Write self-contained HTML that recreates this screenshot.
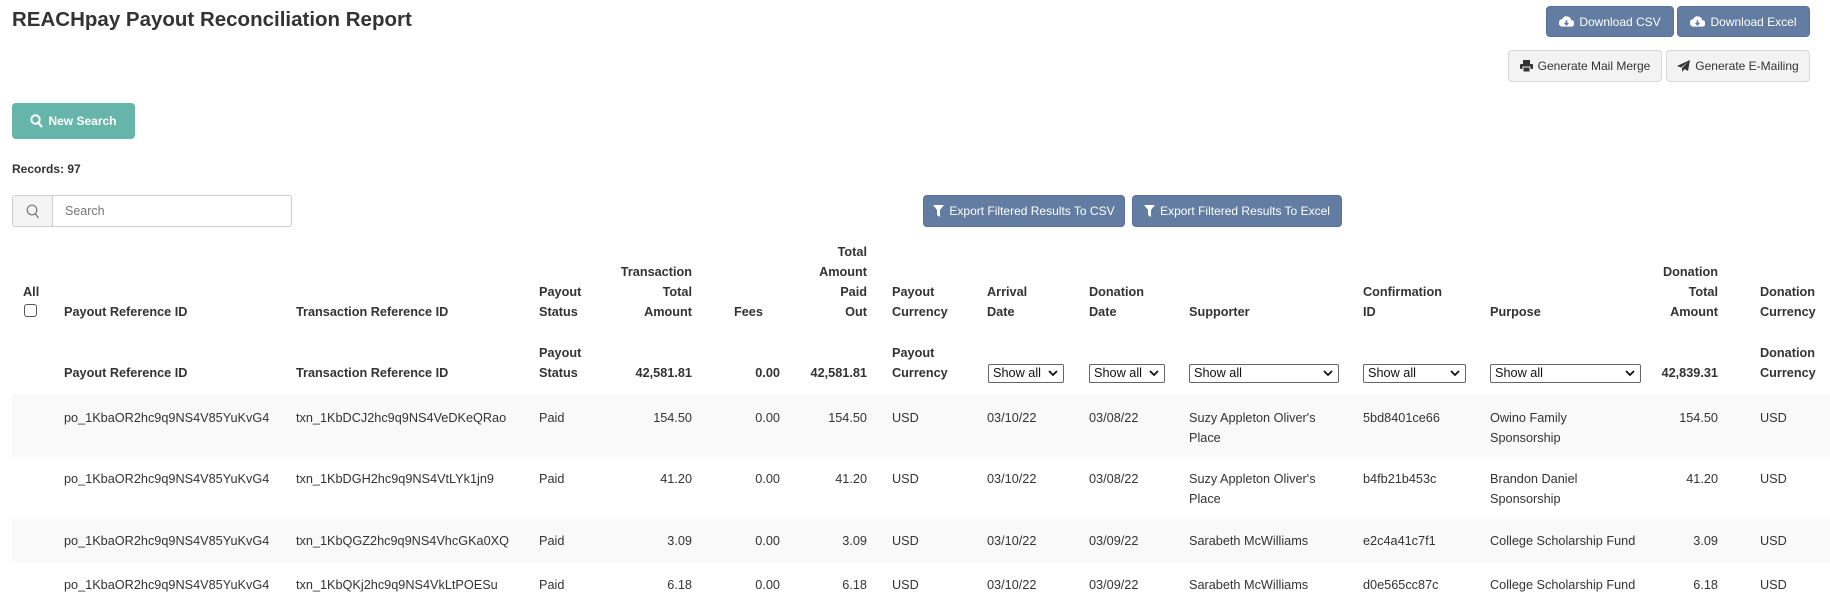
<!DOCTYPE html>
<html><head><meta charset="utf-8"><style>
*{box-sizing:border-box;margin:0;padding:0}
body{width:1830px;height:606px;background:#fff;font-family:"Liberation Sans",Arial,sans-serif;color:#333;font-size:12.7px;position:relative;overflow:hidden}
.a{position:absolute;line-height:20px;white-space:nowrap}
.b{font-weight:bold}
.r{text-align:right}
.btn{position:absolute;border-radius:4px;display:flex;align-items:center;justify-content:center;font-size:12px;gap:5px}
.blue{background:#627ca2;color:#fff;border:1px solid #58709a}
.grey{background:#f3f3f3;color:#333;border:1px solid #d6d6d6}
.sel{position:absolute;height:19px;border:1px solid #666;border-radius:2px;font-size:12.7px;line-height:17px;padding-left:4px;color:#111;background:#fff}
.sel svg{position:absolute;right:5px;top:5px}
.stripe{position:absolute;left:12px;width:1818px;background:#f9f9f9}
</style></head><body>
<div class="a" style="left:12px;top:6px;font-size:20.5px;line-height:28px;font-weight:bold;color:#333">REACHpay Payout Reconciliation Report</div>

<div class="btn blue" style="left:1546px;top:6px;width:128px;height:31px"><svg width="15" height="13" viewBox="0 0 16 13"><path d="M4 12a4 4 0 0 1-.5-8A5 5 0 0 1 13 5a3.5 3.5 0 0 1 0 7z" fill="#fff"/><path d="M8 5v5M6 8l2 2 2-2" stroke="#627ca2" stroke-width="1.6" fill="none"/></svg>Download CSV</div>
<div class="btn blue" style="left:1677px;top:6px;width:133px;height:31px"><svg width="15" height="13" viewBox="0 0 16 13"><path d="M4 12a4 4 0 0 1-.5-8A5 5 0 0 1 13 5a3.5 3.5 0 0 1 0 7z" fill="#fff"/><path d="M8 5v5M6 8l2 2 2-2" stroke="#627ca2" stroke-width="1.6" fill="none"/></svg>Download Excel</div>
<div class="btn grey" style="left:1508px;top:50px;width:154px;height:32px"><svg width="13" height="12" viewBox="0 0 13 12"><rect x="3" y="0" width="7" height="4" fill="#333"/><rect x="0" y="4" width="13" height="5" rx="1" fill="#333"/><rect x="3" y="7" width="7" height="5" fill="#333" stroke="#f3f3f3"/></svg>Generate Mail Merge</div>
<div class="btn grey" style="left:1666px;top:50px;width:144px;height:32px"><svg width="13" height="12" viewBox="0 0 13 12"><path d="M13 0L0 6l4 1.5L11 2 5 8v4l2.5-3L11 11z" fill="#333"/></svg>Generate E-Mailing</div>

<div class="btn" style="left:12px;top:103px;width:123px;height:36px;background:#66b5aa;color:#fff;font-weight:bold;font-size:12px"><svg width="13" height="14" viewBox="0 0 13 14"><circle cx="5.5" cy="5.5" r="4.2" fill="none" stroke="#fff" stroke-width="2"/><path d="M8.5 9l3.5 4" stroke="#fff" stroke-width="2.2"/></svg>New Search</div>

<div class="a b" style="left:12px;top:159px;font-size:12px">Records: 97</div>

<div style="position:absolute;left:12px;top:195px;width:280px;height:32px;border:1px solid #ccc;border-radius:3px;background:#fff">
<div style="position:absolute;left:0;top:0;width:40px;height:30px;background:#f4f4f4;border-right:1px solid #ccc"></div>
<svg style="position:absolute;left:13px;top:8px" width="14" height="15" viewBox="0 0 14 15"><circle cx="6" cy="6" r="4.8" fill="none" stroke="#777" stroke-width="1.2"/><path d="M9.5 10l3 4" stroke="#777" stroke-width="1.3"/></svg>
<div class="a" style="left:52px;top:5px;color:#777;font-size:12.5px">Search</div></div>

<div class="btn blue" style="left:923px;top:195px;width:202px;height:32px"><svg width="11" height="12" viewBox="0 0 11 12"><path d="M0 0h11L7 5v7L4 10V5z" fill="#fff"/></svg>Export Filtered Results To CSV</div>
<div class="btn blue" style="left:1132px;top:195px;width:210px;height:32px"><svg width="11" height="12" viewBox="0 0 11 12"><path d="M0 0h11L7 5v7L4 10V5z" fill="#fff"/></svg>Export Filtered Results To Excel</div>

<div class="a b" style="left:23px;top:282px">All</div>
<div style="position:absolute;left:24px;top:304px;width:13px;height:13px;border:1px solid #555;border-radius:3px;background:#fff"></div>
<div class="a b" style="left:64px;top:302px">Payout Reference ID</div>
<div class="a b" style="left:296px;top:302px">Transaction Reference ID</div>
<div class="a b" style="left:539px;top:282px">Payout<br>Status</div>
<div class="a b r" style="right:1138px;top:262px">Transaction<br>Total<br>Amount</div>
<div class="a b" style="left:734px;top:302px">Fees</div>
<div class="a b r" style="right:963px;top:242px">Total<br>Amount<br>Paid<br>Out</div>
<div class="a b" style="left:892px;top:282px">Payout<br>Currency</div>
<div class="a b" style="left:987px;top:282px">Arrival<br>Date</div>
<div class="a b" style="left:1089px;top:282px">Donation<br>Date</div>
<div class="a b" style="left:1189px;top:302px">Supporter</div>
<div class="a b" style="left:1363px;top:282px">Confirmation<br>ID</div>
<div class="a b" style="left:1490px;top:302px">Purpose</div>
<div class="a b r" style="right:112px;top:262px">Donation<br>Total<br>Amount</div>
<div class="a b" style="left:1760px;top:282px">Donation<br>Currency</div>

<div class="a b" style="left:64px;top:363px">Payout Reference ID</div>
<div class="a b" style="left:296px;top:363px">Transaction Reference ID</div>
<div class="a b" style="left:539px;top:343px">Payout<br>Status</div>
<div class="a b r" style="right:1138px;top:363px">42,581.81</div>
<div class="a b r" style="right:1050px;top:363px">0.00</div>
<div class="a b r" style="right:963px;top:363px">42,581.81</div>
<div class="a b" style="left:892px;top:343px">Payout<br>Currency</div>
<div class="sel" style="left:988px;top:364px;width:76px">Show all<svg width="10" height="7" viewBox="0 0 10 7"><path d="M1 1l4 4 4-4" stroke="#111" stroke-width="1.8" fill="none"/></svg></div>
<div class="sel" style="left:1089px;top:364px;width:76px">Show all<svg width="10" height="7" viewBox="0 0 10 7"><path d="M1 1l4 4 4-4" stroke="#111" stroke-width="1.8" fill="none"/></svg></div>
<div class="sel" style="left:1189px;top:364px;width:150px">Show all<svg width="10" height="7" viewBox="0 0 10 7"><path d="M1 1l4 4 4-4" stroke="#111" stroke-width="1.8" fill="none"/></svg></div>
<div class="sel" style="left:1363px;top:364px;width:103px">Show all<svg width="10" height="7" viewBox="0 0 10 7"><path d="M1 1l4 4 4-4" stroke="#111" stroke-width="1.8" fill="none"/></svg></div>
<div class="sel" style="left:1490px;top:364px;width:151px">Show all<svg width="10" height="7" viewBox="0 0 10 7"><path d="M1 1l4 4 4-4" stroke="#111" stroke-width="1.8" fill="none"/></svg></div>
<div class="a b r" style="right:112px;top:363px">42,839.31</div>
<div class="a b" style="left:1760px;top:343px">Donation<br>Currency</div>

<div class="stripe" style="top:394px;height:63px"></div>
<div class="stripe" style="top:519px;height:43px"></div>

<div class="a" style="left:64px;top:408px">po_1KbaOR2hc9q9NS4V85YuKvG4</div>
<div class="a" style="left:296px;top:408px">txn_1KbDCJ2hc9q9NS4VeDKeQRao</div>
<div class="a" style="left:539px;top:408px">Paid</div>
<div class="a r" style="right:1138px;top:408px">154.50</div>
<div class="a r" style="right:1050px;top:408px">0.00</div>
<div class="a r" style="right:963px;top:408px">154.50</div>
<div class="a" style="left:892px;top:408px">USD</div>
<div class="a" style="left:987px;top:408px">03/10/22</div>
<div class="a" style="left:1089px;top:408px">03/08/22</div>
<div class="a" style="left:1189px;top:408px">Suzy Appleton Oliver's<br>Place</div>
<div class="a" style="left:1363px;top:408px">5bd8401ce66</div>
<div class="a" style="left:1490px;top:408px">Owino Family<br>Sponsorship</div>
<div class="a r" style="right:112px;top:408px">154.50</div>
<div class="a" style="left:1760px;top:408px">USD</div>

<div class="a" style="left:64px;top:469px">po_1KbaOR2hc9q9NS4V85YuKvG4</div>
<div class="a" style="left:296px;top:469px">txn_1KbDGH2hc9q9NS4VtLYk1jn9</div>
<div class="a" style="left:539px;top:469px">Paid</div>
<div class="a r" style="right:1138px;top:469px">41.20</div>
<div class="a r" style="right:1050px;top:469px">0.00</div>
<div class="a r" style="right:963px;top:469px">41.20</div>
<div class="a" style="left:892px;top:469px">USD</div>
<div class="a" style="left:987px;top:469px">03/10/22</div>
<div class="a" style="left:1089px;top:469px">03/08/22</div>
<div class="a" style="left:1189px;top:469px">Suzy Appleton Oliver's<br>Place</div>
<div class="a" style="left:1363px;top:469px">b4fb21b453c</div>
<div class="a" style="left:1490px;top:469px">Brandon Daniel<br>Sponsorship</div>
<div class="a r" style="right:112px;top:469px">41.20</div>
<div class="a" style="left:1760px;top:469px">USD</div>

<div class="a" style="left:64px;top:531px">po_1KbaOR2hc9q9NS4V85YuKvG4</div>
<div class="a" style="left:296px;top:531px">txn_1KbQGZ2hc9q9NS4VhcGKa0XQ</div>
<div class="a" style="left:539px;top:531px">Paid</div>
<div class="a r" style="right:1138px;top:531px">3.09</div>
<div class="a r" style="right:1050px;top:531px">0.00</div>
<div class="a r" style="right:963px;top:531px">3.09</div>
<div class="a" style="left:892px;top:531px">USD</div>
<div class="a" style="left:987px;top:531px">03/10/22</div>
<div class="a" style="left:1089px;top:531px">03/09/22</div>
<div class="a" style="left:1189px;top:531px">Sarabeth McWilliams</div>
<div class="a" style="left:1363px;top:531px">e2c4a41c7f1</div>
<div class="a" style="left:1490px;top:531px">College Scholarship Fund</div>
<div class="a r" style="right:112px;top:531px">3.09</div>
<div class="a" style="left:1760px;top:531px">USD</div>

<div class="a" style="left:64px;top:575px">po_1KbaOR2hc9q9NS4V85YuKvG4</div>
<div class="a" style="left:296px;top:575px">txn_1KbQKj2hc9q9NS4VkLtPOESu</div>
<div class="a" style="left:539px;top:575px">Paid</div>
<div class="a r" style="right:1138px;top:575px">6.18</div>
<div class="a r" style="right:1050px;top:575px">0.00</div>
<div class="a r" style="right:963px;top:575px">6.18</div>
<div class="a" style="left:892px;top:575px">USD</div>
<div class="a" style="left:987px;top:575px">03/10/22</div>
<div class="a" style="left:1089px;top:575px">03/09/22</div>
<div class="a" style="left:1189px;top:575px">Sarabeth McWilliams</div>
<div class="a" style="left:1363px;top:575px">d0e565cc87c</div>
<div class="a" style="left:1490px;top:575px">College Scholarship Fund</div>
<div class="a r" style="right:112px;top:575px">6.18</div>
<div class="a" style="left:1760px;top:575px">USD</div>
</body></html>
